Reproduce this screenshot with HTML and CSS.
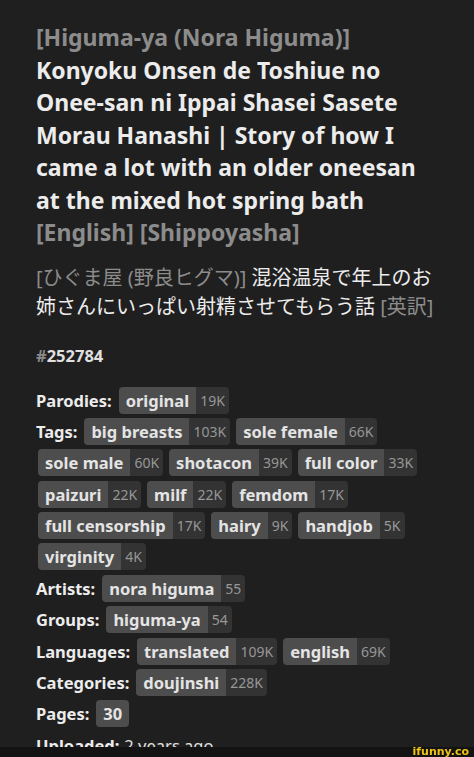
FILE: index.html
```html
<!DOCTYPE html>
<html lang="en">
<head>
    <meta charset="UTF-8">
    <meta name="viewport" content="width=device-width, initial-scale=1.0">
    <title>#252784</title>
    <link rel="stylesheet" href="styles.css">
</head>
<body>
    <div id="info">
        <h1 class="title">
            <span class="before">[Higuma-ya (Nora Higuma)]</span>
            <span class="pretty">Konyoku Onsen de Toshiue no Onee-san ni Ippai Shasei Sasete Morau Hanashi | Story of how I came a lot with an older oneesan at the mixed hot spring bath</span>
            <span class="after">[English] [Shippoyasha]</span>
        </h1>
        <h2 class="title jp"><span class="before">[ひぐま屋 (野良ヒグマ)]</span> <span class="pretty">混浴温泉で年上のお姉さんにいっぱい射精させてもらう話</span> <span class="after">[英訳]</span></h2>
        <h3 id="gallery_id"><span class="hash">#</span>252784</h3>

        <section id="tags">
            <div class="tag-container">
                <span class="label">Parodies:</span>
                <a class="tag"><span class="name">original</span><span class="count">19K</span></a>
            </div>
            <div class="tag-container">
                <span class="label">Tags:</span>
                <a class="tag"><span class="name">big breasts</span><span class="count">103K</span></a>
                <a class="tag"><span class="name">sole female</span><span class="count">66K</span></a>
                <a class="tag"><span class="name">sole male</span><span class="count">60K</span></a>
                <a class="tag"><span class="name">shotacon</span><span class="count">39K</span></a>
                <a class="tag"><span class="name">full color</span><span class="count">33K</span></a>
                <a class="tag"><span class="name">paizuri</span><span class="count">22K</span></a>
                <a class="tag"><span class="name">milf</span><span class="count">22K</span></a>
                <a class="tag"><span class="name">femdom</span><span class="count">17K</span></a>
                <a class="tag"><span class="name">full censorship</span><span class="count">17K</span></a>
                <a class="tag"><span class="name">hairy</span><span class="count">9K</span></a>
                <a class="tag"><span class="name">handjob</span><span class="count">5K</span></a>
                <a class="tag"><span class="name">virginity</span><span class="count">4K</span></a>
            </div>
            <div class="tag-container">
                <span class="label">Artists:</span>
                <a class="tag"><span class="name">nora higuma</span><span class="count">55</span></a>
            </div>
            <div class="tag-container">
                <span class="label">Groups:</span>
                <a class="tag"><span class="name">higuma-ya</span><span class="count">54</span></a>
            </div>
            <div class="tag-container">
                <span class="label">Languages:</span>
                <a class="tag"><span class="name">translated</span><span class="count">109K</span></a>
                <a class="tag"><span class="name">english</span><span class="count">69K</span></a>
            </div>
            <div class="tag-container">
                <span class="label">Categories:</span>
                <a class="tag"><span class="name">doujinshi</span><span class="count">228K</span></a>
            </div>
            <div class="tag-container">
                <span class="label">Pages:</span>
                <a class="tag"><span class="name">30</span></a>
            </div>
            <div class="tag-container">
                <span class="label">Uploaded:</span>
                <span class="time">2 years ago</span>
            </div>
        </section>
    </div>
    <div class="watermark">ifunny.co</div>
</body>
</html>
```

FILE: styles.css
```css
html, body {
    margin: 0;
    padding: 0;
    height: 757px;
    overflow: hidden;
}

body {
    background-color: #1f1f1f;
    color: #e6e6e6;
    font-family: "Noto Sans", "Noto Sans CJK JP", sans-serif;
}

#info {
    padding: 21px 36px 0;
}

.title {
    margin: 0;
}

h1.title {
    font-size: 23px;
    line-height: 32.5px;
    font-weight: 700;
    color: #ececec;
}

.title .before,
.title .after {
    color: #8c8c8c;
}

h2.jp {
    margin-top: 14px;
    font-size: 20px;
    line-height: 29.5px;
    font-weight: 400;
    color: #ececec;
}

#gallery_id {
    margin: 23px 0 0;
    font-size: 16.5px;
    line-height: 22px;
    font-weight: 700;
    color: #e0e0e0;
}

#gallery_id .hash {
    color: #8a8a8a;
}

#tags {
    margin-top: 20px;
    display: flex;
    flex-direction: column;
    gap: 4.4px;
}

.tag-container {
    display: flex;
    flex-wrap: wrap;
    align-items: center;
    gap: 4.4px 4px;
}

.label {
    font-size: 16.5px;
    font-weight: 700;
    color: #ececec;
    margin-right: 1px;
    line-height: 27px;
}

.time {
    font-size: 16.5px;
    line-height: 27px;
    color: #e0e0e0;
}

.tag {
    display: inline-flex;
    height: 27px;
    margin-left: 2px;
    border-radius: 4px;
    overflow: hidden;
}

.tag .name {
    background-color: #4d4d4d;
    color: #e4e4e4;
    font-size: 16.5px;
    font-weight: 700;
    line-height: 27px;
    padding: 0 7px;
}

.tag .count {
    background-color: #333333;
    color: #979797;
    font-size: 14px;
    line-height: 27px;
    padding: 0 4px;
}

.watermark {
    position: fixed;
    left: 0;
    right: 0;
    bottom: 0;
    height: 10px;
    background-color: #131313;
    color: #f2c413;
    font-family: "DejaVu Sans", sans-serif;
    font-size: 11px;
    font-weight: 700;
    line-height: 10px;
    text-align: right;
    padding-right: 5px;
}
```
